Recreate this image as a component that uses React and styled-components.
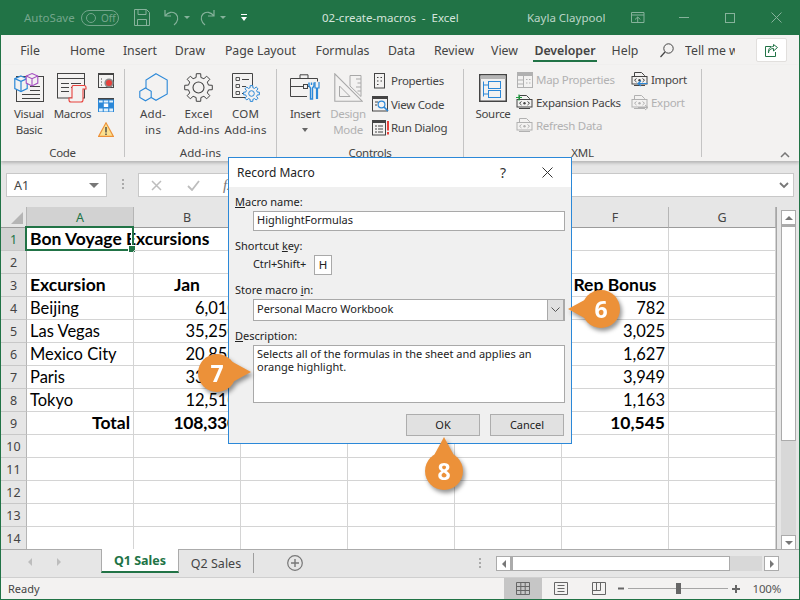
import React from "react";
import styled, { createGlobalStyle } from "styled-components";

const GREEN = "#217346";
const INK = "#444444";
const DIM = "#b1b1b1";
const BLUE = "#2b88d8";
const UI = '"Noto Sans", "Open Sans", sans-serif';

const Global = createGlobalStyle`
  * { box-sizing: border-box; }
  html, body { margin: 0; padding: 0; background: #fff; }
  #root { width: 800px; height: 600px; }
`;

const Win = styled.div`
  position: relative; width: 800px; height: 600px; overflow: hidden;
  display: flex; flex-direction: column;
  border: 1px solid ${GREEN}; border-top: 0;
  font-family: ${UI}; color: ${INK}; background: #fff;
`;
const Drawing = styled.svg` display: block; flex: none; `;

/* ---------- title bar ---------- */
const TitleBar = styled.div`
  height: 35px; flex: none; display: flex; align-items: center;
  background: ${GREEN}; margin: 0 -1px; padding-left: 24px;
  font-size: 11.5px; color: #d5e4dc;
`;
const Slot = styled.div`
  flex: none; width: ${p => p.$w}px; display: flex; align-items: center;
  white-space: nowrap; color: ${p => p.$color || "inherit"};
  justify-content: ${p => p.$center ? "center" : "flex-start"};
`;
const Toggle = styled.div`
  width: 38px; height: 16px; border: 1px solid #74a68c; border-radius: 8px; color: #74a68c;
  font-size: 10px; display: flex; align-items: center; padding-left: 4px; gap: 5px;
  &::before { content: ""; width: 8px; height: 8px; border-radius: 50%; border: 1px solid #74a68c; }
`;

/* ---------- tabs ---------- */
const TabBar = styled.div`
  height: 30px; flex: none; display: flex; background: #f3f2f1; padding-left: 9px; font-size: 12.3px;
`;
const Tab = styled.div`
  flex: none; width: ${p => p.$w}px; margin-right: ${p => p.$mr || 0}px;
  display: flex; justify-content: center; align-items: flex-start; padding-top: 7px;
`;
const TabLabel = styled.span`
  line-height: 18px; white-space: nowrap; padding-inline: 1px;
  border-bottom: 2px solid ${p => p.$on ? GREEN : "transparent"};
  font-weight: ${p => p.$on ? 600 : 400};
`;
const TellMe = styled.div`
  margin-left: 11px; width: 50px; overflow: hidden; white-space: nowrap; line-height: 18px; margin-top: 7px;
`;
const SearchBox = styled.div` margin-left: 15px; margin-top: 8px; height: 16px; `;
const ShareBtn = styled.div`
  width: 31px; height: 24px; margin: 3px 0 0 21px; background: #fff; border: 1px solid #e1dfdd; border-radius: 2px;
  display: flex; align-items: center; justify-content: center;
`;

/* ---------- ribbon ---------- */
const Ribbon = styled.div`
  height: 96px; flex: none; display: flex; background: #f3f2f1; padding-top: 4px; padding-bottom: 4px;
  box-shadow: 0 2px 3px rgba(0,0,0,.22); position: relative; z-index: 1; font-size: 11.5px; letter-spacing: -.3px;
`;
const Group = styled.div`
  flex: none; width: ${p => p.$w}px; border-right: 1px solid #c4c4c4; display: flex; flex-direction: column;
`;
const GroupRow = styled.div` display: flex; flex: 1; padding-left: ${p => p.$pl || 0}px; `;
const GroupLabel = styled.div`
  text-align: center; line-height: 16px; height: 16px; margin-bottom: -4px;
  letter-spacing: ${p => p.$wide ? ".1px" : "inherit"};
`;
const BigBtn = styled.div`
  flex: none; width: ${p => p.$w}px; display: flex; flex-direction: column; align-items: center;
  color: ${p => p.$off ? DIM : INK};
`;
const BigIcon = styled.div` height: 37px; flex: none; display: flex; align-items: center; justify-content: center; `;
const BigText = styled.div`
  line-height: 16px; text-align: center; white-space: nowrap;
  letter-spacing: ${p => p.$wide ? ".2px" : "inherit"};
`;
const Caret = styled.div`
  margin: 6px auto 0; width: 0; height: 0; border: 3px solid transparent; border-top: 4px solid #666; border-bottom: 0;
`;
const IconCol = styled.div`
  flex: none; width: ${p => p.$w}px; margin-left: ${p => p.$ml || 0}px; margin-top: ${p => p.$mt || 0}px;
  display: flex; flex-direction: column;
`;
const IconCell = styled.div` height: ${p => p.$h}px; display: flex; align-items: center; `;
const SmallRow = styled.div`
  height: ${p => p.$h || 23.5}px; display: flex; align-items: center; white-space: nowrap; color: ${p => p.$off ? DIM : INK};
`;
const SmallIcon = styled.div`
  width: ${p => p.$w}px; padding-left: ${p => p.$pl || 0}px; flex: none; display: flex; align-items: center;
`;
const Collapse = styled.div` margin: auto 9px -1px auto; `;

/* ---------- formula bar ---------- */
const FormulaBar = styled.div`
  height: 46px; flex: none; background: #e6e6e6; padding: 12px 5px 0 5px; display: flex; align-items: flex-start;
`;
const NameBox = styled.div`
  width: 101px; height: 24px; background: #fff; border: 1px solid #c8c8c8; display: flex; align-items: center;
  justify-content: space-between; padding: 0 7px; font-size: 12.5px;
`;
const DownTri = styled.span`
  width: 0; height: 0; border: 5px solid transparent; border-top: 5px solid #777; border-bottom: 0;
`;
const GripSlot = styled.div` width: 31px; height: 24px; flex: none; display: flex; align-items: center; justify-content: center; `;
const Grip = styled.div`
  width: 2px; height: ${p => p.$h || 11}px; flex: none;
  background: repeating-linear-gradient(#aaa 0 2px, transparent 2px 4px);
`;
const FormulaField = styled.div`
  flex: 1; height: 24px; background: #fff; border: 1px solid #c8c8c8;
  display: flex; align-items: center; padding: 0 4px 0 12px;
`;
const FxBtn = styled.div` width: ${p => p.$w}px; flex: none; `;
const FxGlyph = styled.i` font-family: "Liberation Serif", serif; font-size: 15px; color: #777; `;
const Expand = styled.div` margin-left: auto; `;

/* ---------- sheet ---------- */
const SheetWrap = styled.div` height: 342px; flex: none; display: flex; background: #e6e6e6; `;
const Grid = styled.div`
  width: 776px; height: 342px; overflow: hidden; flex: none; background: #fff; border-right: 1px solid #a6a6a6;
  display: grid; grid-template-columns: 26px repeat(7, 107px); grid-template-rows: 21px repeat(14, 23px);
`;
const Corner = styled.div`
  background: #e6e6e6; border-right: 1px solid #b5b5b5; border-bottom: 1px solid #9b9b9b;
  display: flex; align-items: flex-end; justify-content: flex-end; padding: 0 3px 3px 0;
  &::after { content: ""; width: 12px; height: 12px; background: #b5b5b5; clip-path: polygon(100% 0, 100% 100%, 0 100%); }
`;
const ColHead = styled.div`
  background: ${p => p.$on ? "#d2d2d2" : "#e6e6e6"}; color: ${p => p.$on ? GREEN : INK};
  border-right: 1px solid #b5b5b5; border-bottom: 1px solid #9b9b9b;
  font-size: 12.5px; display: flex; align-items: center; justify-content: center;
`;
const RowHead = styled.div`
  background: ${p => p.$on ? "#d2d2d2" : "#e6e6e6"}; color: ${p => p.$on ? GREEN : INK};
  border-right: 1px solid #b5b5b5; border-bottom: 1px solid #c8c8c8;
  font-size: 12.5px; display: flex; align-items: center; justify-content: center; padding-top: 1px;
`;
const Cell = styled.div`
  position: relative; border-right: 1px solid #d4d4d4; border-bottom: 1px solid #d4d4d4;
  font-family: Lato, "Liberation Sans", sans-serif; color: #000;
  font-size: ${p => p.$bold ? 17.5 : 16.5}px;
  font-weight: ${p => p.$bold ? 700 : 400};
  letter-spacing: ${p => p.$tight ? "-.2px" : 0};
  white-space: nowrap; line-height: 22px; padding: 0 3px;
  text-align: ${p => p.$align || "left"};
`;
const Selection = styled.div`
  position: absolute; left: -2px; top: -2px; right: -1px; bottom: -1px;
  border: 2px solid ${GREEN}; box-shadow: inset 0 0 0 1px #fff;
  &::after { content: ""; position: absolute; right: -4px; bottom: -4px; width: 6px; height: 6px; background: ${GREEN}; border: 1px solid #fff; }
`;

const VScroll = styled.div`
  flex: none; width: 15px; margin: 3px 0 0 4px; height: 340px; background: #d8d8d8; display: flex; flex-direction: column;
  position: relative; z-index: 1;
`;
const ScrollBtn = styled.div`
  height: 15px; flex: none; background: #fff; border: 1px solid #ababab; display: flex; align-items: center; justify-content: center;
  margin-top: ${p => p.$push ? "auto" : 0};
`;
const VThumb = styled.div` height: 216px; flex: none; background: #fff; border: 1px solid #ababab; border-top-width: 2px; `;
const Tri = styled.span`
  width: 0; height: 0; border: 4px solid transparent;
  ${p => p.$dir === "up" && `border-bottom: 4px solid #777; border-top: 0;`}
  ${p => p.$dir === "down" && `border-top: 4px solid #777; border-bottom: 0;`}
  ${p => p.$dir === "left" && `border-right: 4px solid ${p.$c || "#777"}; border-left: 0;`}
  ${p => p.$dir === "right" && `border-left: 4px solid ${p.$c || "#777"}; border-right: 0;`}
`;

/* ---------- sheet tabs ---------- */
const SheetTabs = styled.div`
  height: 28px; flex: none; display: flex; background: #e6e6e6; border-top: 1px solid #ababab;
`;
const TabNav = styled.div`
  width: 100px; flex: none; display: flex; align-items: center; padding: 0 0 4px 27px; gap: 25px;
`;
const ActiveSheet = styled.div`
  width: 78px; flex: none; height: 24px; margin-top: -1px; background: #fff; color: ${GREEN}; font-weight: 700; font-size: 12.5px;
  border-left: 1px solid #ababab; border-right: 1px solid #ababab; border-bottom: 2px solid ${GREEN};
  display: flex; align-items: center; justify-content: center;
`;
const SheetTab = styled.div`
  width: 75px; height: 20px; margin-top: 3px; flex: none; border-right: 1px solid #9e9e9e; font-size: 12.5px;
  display: flex; align-items: center; justify-content: center;
`;
const AddSheet = styled.div` margin: 5px 0 0 33px; height: 16px; `;
const HArea = styled.div` margin: 6px 20px 0 auto; display: flex; align-items: center; height: 15px; `;
const HBtn = styled.div`
  width: ${p => p.$w}px; margin-left: ${p => p.$ml || 0}px; height: 15px; flex: none; background: #fff;
  border: 1px solid #ababab; display: flex; align-items: center; justify-content: center;
`;
const HThumb = styled.div` width: 219px; height: 15px; background: #fff; border: 1px solid #ababab; border-left-width: 2px; flex: none; `;
const HRest = styled.div` width: 32px; height: 15px; background: #d8d8d8; flex: none; margin-right: 2px; `;

/* ---------- status ---------- */
const Status = styled.div`
  height: 22px; flex: none; background: #f3f2f1; border-top: 1px solid #cfcfcf; display: flex; align-items: center;
  padding-left: 7px; font-size: 11px;
`;
const ViewBtn = styled.div`
  width: ${p => p.$w}px; flex: none; height: 21px; display: flex; align-items: center; justify-content: center;
  background: ${p => p.$on ? "#c6c6c6" : "transparent"}; margin-left: ${p => p.$push ? "auto" : 0};
`;
const Slider = styled.div` width: 100px; height: 1px; background: #a6a6a6; margin: 0 4px 0 3px; position: relative; `;
const SliderKnob = styled.div` position: absolute; left: 48px; top: -5px; width: 5px; height: 11px; background: #666; `;
const Zoom = styled.div` margin: 0 18px 0 13px; font-size: 11.5px; letter-spacing: -.2px; color: #555; `;

/* ---------- dialog ---------- */
const Dialog = styled.div`
  position: absolute; left: 227px; top: 157px; width: 344px; height: 287px; z-index: 5;
  border: 1px solid #2b88d8; background: #f0f0f0; display: flex; flex-direction: column;
  font-size: 11px; color: #222;
`;
const DlgTitle = styled.div`
  height: 29px; flex: none; background: #fff; display: flex; align-items: center; padding: 0 0 0 8px; font-size: 12px;
`;
const DlgHelp = styled.div` margin-left: auto; width: 16px; margin-right: 13px; font-size: 14px; color: #333; text-align: center; `;
const DlgClose = styled.div` width: 47px; display: flex; justify-content: center; `;
const DlgBody = styled.div` flex: 1; padding: 7px 6px 0 6px; display: flex; flex-direction: column; `;
const FieldLabel = styled.div` line-height: 14px; height: 14px; margin-top: ${p => p.$mt || 8}px; white-space: nowrap; `;
const Field = styled.div`
  margin: 2px 0 0 18px; height: ${p => p.$h}px; background: #fff; border: 1px solid #a9a9a9; flex: none;
  padding: ${p => p.$multi ? "1px 3px" : "0 3px 2px"}; line-height: ${p => p.$multi ? "13px" : `${p.$h - 4}px`};
  white-space: ${p => p.$multi ? "normal" : "nowrap"}; position: relative;
`;
const ShortcutRow = styled.div` margin: 2px 0 0 18px; height: 20px; display: flex; align-items: center; `;
const KeyLabel = styled.span` width: 61px; flex: none; line-height: 18px; padding-bottom: 2px; white-space: nowrap; letter-spacing: -.1px; `;
const KeyBox = styled.div`
  width: 18px; height: 20px; background: #fff; border: 1px solid #a9a9a9; font-size: 11.5px; padding-bottom: 1px;
  display: flex; align-items: center; justify-content: center;
`;
const SelectBtn = styled.div`
  position: absolute; right: -1px; top: -1px; bottom: -1px; width: 18px; background: #e1e1e1; border: 1px solid #a9a9a9; border-right-width: 2px;
  display: flex; align-items: center; justify-content: center;
`;
const DlgButtons = styled.div` margin: 11px 1px 0 0; display: flex; justify-content: flex-end; gap: 10px; `;
const DlgButton = styled.div`
  width: 74px; height: 22px; background: #e1e1e1; border: 1px solid #adadad; padding-bottom: 2px;
  display: flex; align-items: center; justify-content: center;
`;

/* ---------- callouts ---------- */
const Bubble = styled.div`
  position: absolute; left: ${p => p.$x}px; top: ${p => p.$y}px; width: 38px; height: 38px; border-radius: 50%;
  background: #ec9139; color: #fff; z-index: 6; display: flex; align-items: center; justify-content: center;
  font-family: "Open Sans", sans-serif; font-weight: 700; font-size: 23px;
  filter: drop-shadow(2px 3px 2px rgba(0,0,0,.42));
  &::before {
    content: ""; position: absolute; width: 0; height: 0; border: 12px solid transparent;
    ${p => p.$dir === "left" && `left: -14px; top: 7px; border-right: 22px solid #ec9139; border-left: 0;`}
    ${p => p.$dir === "right" && `right: -15px; top: 6px; border-left: 22px solid #ec9139; border-right: 0;`}
    ${p => p.$dir === "up" && `top: -15px; left: 7px; border-bottom: 22px solid #ec9139; border-top: 0;`}
  }
  span { position: relative; }
`;

/* ---------- icons ---------- */
const gear = (cx, cy, r1, r2, n) => {
  const pts = [];
  const step = (Math.PI * 2) / n;
  for (let i = 0; i < n; i++) {
    const a = i * step - Math.PI / 2;
    const w = step * 0.2;
    const w2 = step * 0.3;
    [[r1, a - w2], [r2, a - w], [r2, a + w], [r1, a + w2]].forEach(([r, t]) =>
      pts.push(`${(cx + r * Math.cos(t)).toFixed(1)},${(cy + r * Math.sin(t)).toFixed(1)}`));
  }
  return pts.join(" ");
};

const Svg = ({ w, h, children }) => (
  <Drawing width={w} height={h} viewBox={`0 0 ${w} ${h}`} fill="none">{children}</Drawing>
);
const BG = "#f3f2f1";
const PURPLE = "#a650c2";
const RED = "#e8413c";

const VisualBasicIcon = () => (
  <Svg w={30} h={30}>
    <rect x="2.5" y="3.5" width="27" height="25" stroke={INK} />
    <path d="M16 13.5h10M16 17.5h10M8 21.5h18M8 25.5h18" stroke={INK} />
    <path d="M7 3l6.2 2.6v10L7 18.5.8 15.6v-10z" fill={BG} stroke={BLUE} strokeWidth="1.2" />
    <path d="M.8 5.6 7 8.3l6.2-2.7M7 8.3v10" stroke={BLUE} strokeWidth="1.2" />
    <path d="M18 .6l5.8 2.5v7L18 13l-5.8-2.9v-7z" fill={BG} stroke={PURPLE} strokeWidth="1.1" />
    <path d="M12.2 3.1 18 5.700l5.800-2.600M18 5.700V13" stroke={PURPLE} strokeWidth="1.1" />
  </Svg>
);
const MacrosIcon = () => (
  <Svg w={31} h={30}>
    <rect x=".5" y=".5" width="27" height="24.5" stroke={INK} fill={BG} />
    <path d="M1 5.500h26M4 10.500h8M4 14.500h8M4 18.500h8M14 10.500h10M14 14.500h10" stroke={INK} />
    <path d="M16 12.500h11a2 2 0 0 1 2 2v1.500h-3V27a2 2 0 0 1-2 2H14a2 2 0 0 1-2-2v-2h3V14a2 2 0 0 1 1-1.500z" fill={BG} stroke={RED} strokeWidth="1.1" />
  </Svg>
);
const RecordIcon = () => (
  <Svg w={16} h={16}>
    <rect x=".5" y=".5" width="15" height="14" stroke={INK} fill={BG} />
    <rect x="0" y="0" width="16" height="2" fill={INK} />
    <path d="M3 6h1M3 9h1M3 12h1" stroke={INK} />
    <circle cx="11" cy="10" r="4.600" fill="#8a8a8a" />
    <circle cx="11" cy="10" r="3" fill={RED} />
  </Svg>
);
const TableIcon = () => (
  <Svg w={16} h={14}>
    <rect x="0" y="0" width="16" height="14" fill={BLUE} />
    <rect x="0" y="0" width="16" height="1.500" fill={INK} />
    <rect x="5.800" y="5.500" width="4.400" height="3.500" fill="#fff" />
    <path d="M1 10.500h3.700v3H1zM5.800 10.500h4.400v3H5.800zM11.300 10.500H15v3h-3.700z" fill="#dff0fb" />
    <path d="M1 2.500h3.700v2H1zM5.800 2.500h4.400v2H5.800zM11.300 2.500H15v2h-3.700z" fill="#dff0fb" />
  </Svg>
);
const WarnIcon = () => (
  <Svg w={16} h={15}>
    <path d="M8 .8 15.400 14.400H.6z" fill="#fbe08e" stroke="#ed9138" strokeWidth="1.1" />
    <path d="M8 5v5.500M8 11.500v1.600" stroke="#444" strokeWidth="1.4" />
  </Svg>
);
const AddInsIcon = () => (
  <Svg w={29} h={29}>
    <path d="M17 .7 28.200 7v14L17 27.300 7 21.500V7z" stroke={BLUE} strokeWidth="1.1" />
    <path d="M6.500 15 12.200 18.200v6.300L6.500 27.800.8 24.500v-6.300z" fill={BG} stroke={BLUE} strokeWidth="1.1" />
  </Svg>
);
const GearIcon = () => (
  <Svg w={29} h={29}>
    <polygon points={gear(14.5, 14.5, 10.3, 14, 8)} stroke={INK} strokeWidth="1" />
    <circle cx="14.500" cy="14.500" r="5.500" stroke={INK} strokeWidth="1.1" />
  </Svg>
);
const ComIcon = () => (
  <Svg w={28} h={29}>
    <path d="M.5.5h20v24H.5z" stroke={INK} />
    <path d="M4 4.500h3.500v3H4zM4 11.500h3.500v3H4zM4 18.500h3.500v3H4z" stroke={INK} strokeWidth=".9" />
    <path d="M10 6.500h7M10 13.500h4M10 20.500h2" stroke={INK} />
    <polygon points={gear(19.5, 20.5, 6, 8, 8)} fill={BG} stroke={BLUE} strokeWidth="1" />
    <circle cx="19.500" cy="20.500" r="2.800" stroke={BLUE} />
  </Svg>
);
const InsertIcon = () => (
  <Svg w={30} h={27}>
    <path d="M17 22.500H.5v-18h27v3" stroke={INK} />
    <path d="M10 4V.8h8V4M.5 12.500h13M18 12.500h2" stroke={INK} />
    <rect x="13.500" y="10.500" width="4" height="4" stroke={INK} fill={BG} />
    <path d="M19 8.500v3.500l1.500 2V25h2V14l1.500-2V8.500M21.500 8.500v2.500" stroke={BLUE} strokeWidth="1.4" />
    <path d="M26 8v6h1.500v10.500h1V14H30V8" stroke={BLUE} strokeWidth="1.2" transform="translate(-1 0)" />
  </Svg>
);
const DesignIcon = () => (
  <Svg w={29} h={29}>
    <path d="M.8.8v27.400h27.400z" stroke="#a8a8a8" strokeWidth="1.1" />
    <path d="M5.500 13v10.500H16z" stroke="#a8a8a8" />
    <path d="M16 2.500h11v21L16 13z" stroke="#a8a8a8" fill={BG} />
    <path d="M22 6h5M23.500 10h3.500M22 14h5M23.500 18h3.500" stroke="#a8a8a8" />
  </Svg>
);
const SourceIcon = () => (
  <Svg w={28} h={28}>
    <rect x=".75" y=".75" width="26.500" height="26.500" stroke={INK} strokeWidth="1.5" />
    <rect x="1.500" y="1.500" width="25" height="3.500" fill="#b5b5b5" />
    <path d="M4.500 7.500v15M4.500 11h5M4.500 20h5" stroke={BLUE} />
    <rect x="9.500" y="7.500" width="12" height="7" stroke={BLUE} />
    <rect x="9.500" y="16.500" width="12" height="7" stroke={BLUE} />
  </Svg>
);
const PropsIcon = () => (
  <Svg w={12} h={16}>
    <rect x=".5" y=".5" width="10" height="14.500" stroke={INK} />
    <path d="M3 4.500h1.500M6.500 4.500H8M3 8h1.500M6.500 8H8M3 11.500h1.500" stroke={INK} />
  </Svg>
);
const ViewCodeIcon = () => (
  <Svg w={17} h={16}>
    <rect x=".5" y=".5" width="15" height="14.500" stroke={INK} />
    <rect x="1" y="1" width="14" height="2" fill={INK} />
    <path d="M3 6h3M3 9h2" stroke={INK} />
    <circle cx="9.500" cy="8.500" r="3.400" stroke={BLUE} strokeWidth="1.2" fill={BG} />
    <path d="M12 11l4 4" stroke={BLUE} strokeWidth="1.7" />
  </Svg>
);
const RunDialogIcon = () => (
  <Svg w={18} h={16}>
    <rect x=".5" y=".5" width="13" height="14.500" stroke={INK} />
    <rect x="1" y="1" width="12" height="2" fill={INK} />
    <path d="M3 6h2M6 6h5M3 9h2M6 9h5M3 12h2M6 12h5" stroke={INK} />
    <path d="M16 1v9.500M16 12v2.500" stroke={RED} strokeWidth="2" />
  </Svg>
);
const MapPropsIcon = () => (
  <Svg w={16} h={16}>
    <rect x=".5" y=".5" width="15" height="15" stroke={DIM} />
    <rect x="1" y="1" width="14" height="3" fill={DIM} />
    <path d="M.5 8h6M.5 12h6M6.500 4v11.500" stroke={DIM} />
    <path d="M9 7.500h1.500M12 7.500h1.500M9 11h1.500M12 11h1.500" stroke={DIM} />
  </Svg>
);
const XmlDoc = ({ c, children }) => (
  <Svg w={17} h={17}>
    <path d="M3.500 5V1.500h7l3 3V5M3 14.500h11" stroke={c} />
    <rect x="1" y="5.500" width="15" height="7.500" stroke={c} fill={BG} />
    <path d="M5.500 7.500 3.500 9.200l2 1.800M11.500 7.500l2 1.700-2 1.800" stroke={c} />
    <circle cx="8.500" cy="9.200" r="1.200" fill={c} />
    {children}
  </Svg>
);
const CustomizeIcon = () => (
  <Svg w={8} h={9}>
    <path d="M1 1.500h6" stroke="#fff" />
    <path d="M1 4h6L4 8z" fill="#fff" />
  </Svg>
);
const FADE = "#86b29b";

const App = () => {
  const rows = [
    [{ t: "Bon Voyage Excursions", bold: true, sel: true }],
    [],
    [{ t: "Excursion", bold: true }, { t: "Jan", bold: true, align: "center" }, null, null, null, { t: "Rep Bonus", bold: true, align: "center" }],
    [{ t: "Beijing" }, { t: "6,010", align: "right" }, null, null, null, { t: "782", align: "right" }],
    [{ t: "Las Vegas" }, { t: "35,250", align: "right" }, null, null, null, { t: "3,025", align: "right" }],
    [{ t: "Mexico City" }, { t: "20,850", align: "right" }, null, null, null, { t: "1,627", align: "right" }],
    [{ t: "Paris" }, { t: "33,670", align: "right" }, null, null, null, { t: "3,949", align: "right" }],
    [{ t: "Tokyo" }, { t: "12,510", align: "right" }, null, null, null, { t: "1,163", align: "right" }],
    [{ t: "Total", bold: true, align: "right" }, { t: "108,330", bold: true, align: "right", tight: true }, null, null, null, { t: "10,545", bold: true, align: "right" }],
    [], [], [], [], [],
  ];
  const cols = ["A", "B", "C", "D", "E", "F", "G"];
  return (
    <Win>
      <Global />
      <TitleBar>
        <Slot $w={57} $color="#74a68c">AutoSave</Slot>
        <Slot $w={53}><Toggle>Off</Toggle></Slot>
        <Slot $w={30}>
          <Svg w={16} h={17}>
            <path d="M.5.5h12l3 3v13H.5zM4 .5v5h8v-5M3.500 16.500v-6h9v6" stroke={FADE} />
          </Svg>
        </Slot>
        <Slot $w={20}>
          <Svg w={16} h={17}>
            <path d="M1 1v6h6M1 7c3-4 8-5 11-2s2 8-2 11" stroke={FADE} strokeWidth="1.2" />
          </Svg>
        </Slot>
        <Slot $w={15}>
          <Svg w={7} h={4}><path d="M0 0h6L3 3z" fill={FADE} /></Svg>
        </Slot>
        <Slot $w={21}>
          <Svg w={16} h={17}>
            <path d="M15 1v6H9M15 7c-3-4-8-5-11-2s-2 8 2 11" stroke={FADE} strokeWidth="1.2" />
          </Svg>
        </Slot>
        <Slot $w={20}>
          <Svg w={7} h={4}><path d="M0 0h6L3 3z" fill={FADE} /></Svg>
        </Slot>
        <Slot $w={82}><CustomizeIcon /></Slot>
        <Slot $w={205}>02-create-macros&nbsp; -&nbsp; Excel</Slot>
        <Slot $w={104} $color="#bcd5c8">Kayla Claypool</Slot>
        <Slot $w={48}>
          <Svg w={14} h={12}>
            <path d="M.5.5h12.500v10H.5zM.5 3h12.500M4 7.500 6.700 5l2.700 2.500M6.700 5v5" stroke={FADE} />
          </Svg>
        </Slot>
        <Slot $w={46}><Svg w={10} h={2}><path d="M0 .5h10" stroke={FADE} /></Svg></Slot>
        <Slot $w={46}><Svg w={10} h={10}><rect x=".5" y=".5" width="9" height="9" stroke={FADE} /></Svg></Slot>
        <Slot $w={15}><Svg w={11} h={11}><path d="M.5.5l10 10M10.500.5l-10 10" stroke={FADE} /></Svg></Slot>
      </TitleBar>

      <TabBar>
        {[["File", 40, 10], ["Home", 55], ["Insert", 50], ["Draw", 50], ["Page Layout", 91], ["Formulas", 73], ["Data", 45], ["Review", 60], ["View", 41], ["Developer", 80], ["Help", 40]].map(([t, w, mr]) => (
          <Tab key={t} $w={w} $mr={mr}><TabLabel $on={t === "Developer"}>{t}</TabLabel></Tab>
        ))}
        <SearchBox>
          <Svg w={14} h={15}>
            <circle cx="8.500" cy="5.500" r="4.700" stroke={INK} />
            <path d="M5 9l-4.500 5" stroke={INK} strokeWidth="1.2" />
          </Svg>
        </SearchBox>
        <TellMe>Tell me what you want to do</TellMe>
        <ShareBtn>
          <Svg w={13} h={13}>
            <path d="M6 2.500H.5v10h10V8" stroke={GREEN} />
            <path d="M3.500 9c0-3 2-4.500 5-4.500V7L12.500 3.500 8.500.5V2.500C5 2.500 3 5 3.500 9z" stroke={GREEN} />
          </Svg>
        </ShareBtn>
      </TabBar>

      <Ribbon>
        <Group $w={124}>
          <GroupRow $pl={7}>
            <BigBtn $w={42}><BigIcon><VisualBasicIcon /></BigIcon><BigText>Visual<br />Basic</BigText></BigBtn>
            <BigBtn $w={45}><BigIcon><MacrosIcon /></BigIcon><BigText>Macros</BigText></BigBtn>
            <IconCol $w={16} $ml={3}>
              <IconCell $h={23}><RecordIcon /></IconCell>
              <IconCell $h={25}><TableIcon /></IconCell>
              <IconCell $h={24}><WarnIcon /></IconCell>
            </IconCol>
          </GroupRow>
          <GroupLabel>Code</GroupLabel>
        </Group>
        <Group $w={152}>
          <GroupRow $pl={5}>
            <BigBtn $w={46}><BigIcon><AddInsIcon /></BigIcon><BigText $wide>Add-<br />ins</BigText></BigBtn>
            <BigBtn $w={45}><BigIcon><GearIcon /></BigIcon><BigText $wide>Excel<br />Add-ins</BigText></BigBtn>
            <BigBtn $w={49}><BigIcon><ComIcon /></BigIcon><BigText $wide>COM<br />Add-ins</BigText></BigBtn>
          </GroupRow>
          <GroupLabel $wide>Add-ins</GroupLabel>
        </Group>
        <Group $w={187}>
          <GroupRow $pl={6}>
            <BigBtn $w={44}><BigIcon><InsertIcon /></BigIcon><BigText>Insert</BigText><Caret /></BigBtn>
            <BigBtn $w={42} $off><BigIcon><DesignIcon /></BigIcon><BigText>Design<br />Mode</BigText></BigBtn>
            <IconCol $w={90}>
              <SmallRow><SmallIcon $w={22} $pl={5}><PropsIcon /></SmallIcon>Properties</SmallRow>
              <SmallRow><SmallIcon $w={22} $pl={3}><ViewCodeIcon /></SmallIcon>View Code</SmallRow>
              <SmallRow><SmallIcon $w={22} $pl={3}><RunDialogIcon /></SmallIcon>Run Dialog</SmallRow>
            </IconCol>
          </GroupRow>
          <GroupLabel>Controls</GroupLabel>
        </Group>
        <Group $w={238}>
          <GroupRow $pl={6}>
            <BigBtn $w={46}><BigIcon><SourceIcon /></BigIcon><BigText>Source</BigText></BigBtn>
            <IconCol $w={115} $mt={-1}>
              <SmallRow $off $h={23}><SmallIcon $w={20} $pl={1}><MapPropsIcon /></SmallIcon>Map Properties</SmallRow>
              <SmallRow $h={23}><SmallIcon $w={20}>
                <XmlDoc c={INK}><path d="M0 3.500h6M3 .5v6" stroke="#1f9e3f" strokeWidth="1.200" /></XmlDoc>
              </SmallIcon>Expansion Packs</SmallRow>
              <SmallRow $off $h={23}><SmallIcon $w={20}><XmlDoc c={DIM} /></SmallIcon>Refresh Data</SmallRow>
            </IconCol>
            <IconCol $w={60} $mt={-1}>
              <SmallRow $h={23}><SmallIcon $w={20}>
                <XmlDoc c={INK}><path d="M16.500 12.500H7M10 10l-3 2.500 3 2.500" stroke={BLUE} fill="none" strokeWidth="1.200" /></XmlDoc>
              </SmallIcon>Import</SmallRow>
              <SmallRow $off $h={23}><SmallIcon $w={20}>
                <XmlDoc c={DIM}><path d="M7 13.500h9.500M14 11l3 2.500-3 2.500" stroke={DIM} fill="none" /></XmlDoc>
              </SmallIcon>Export</SmallRow>
            </IconCol>
          </GroupRow>
          <GroupLabel>XML</GroupLabel>
        </Group>
        <Collapse>
          <Svg w={10} h={6}><path d="M1 5l4-4 4 4" stroke="#777" strokeWidth="1.500" /></Svg>
        </Collapse>
      </Ribbon>

      <FormulaBar>
        <NameBox>A1<DownTri /></NameBox>
        <GripSlot><Grip $h={12} /></GripSlot>
        <FormulaField>
          <FxBtn $w={36}>
            <Svg w={11} h={11}><path d="M1 1l9 9M10 1l-9 9" stroke="#bdbdbd" strokeWidth="1.500" /></Svg>
          </FxBtn>
          <FxBtn $w={36}>
            <Svg w={13} h={11}><path d="M1 6l4 4 7-9" stroke="#bdbdbd" strokeWidth="1.800" /></Svg>
          </FxBtn>
          <FxGlyph>fx</FxGlyph>
          <Expand>
            <Svg w={10} h={7}><path d="M1 1l4 4 4-4" stroke="#777" strokeWidth="1.800" /></Svg>
          </Expand>
        </FormulaField>
      </FormulaBar>

      <SheetWrap>
        <Grid>
          <Corner />
          {cols.map(c => <ColHead key={c} $on={c === "A"}>{c}</ColHead>)}
          {rows.map((r, i) => (
            <React.Fragment key={i}>
              <RowHead $on={i === 0}>{i + 1}</RowHead>
              {cols.map((c, j) => {
                const d = r[j];
                return (
                  <Cell key={c} $bold={d?.bold} $align={d?.align} $tight={d?.tight}>
                    {d?.t}
                    {d?.sel && <Selection />}
                  </Cell>
                );
              })}
            </React.Fragment>
          ))}
        </Grid>
        <VScroll>
          <ScrollBtn><Tri $dir="up" /></ScrollBtn>
          <VThumb />
          <ScrollBtn $push><Tri $dir="down" /></ScrollBtn>
        </VScroll>
      </SheetWrap>

      <SheetTabs>
        <TabNav><Tri $dir="left" $c="#bdbdbd" /><Tri $dir="right" $c="#bdbdbd" /></TabNav>
        <ActiveSheet>Q1 Sales</ActiveSheet>
        <SheetTab>Q2 Sales</SheetTab>
        <AddSheet>
          <Svg w={16} h={16}>
            <circle cx="8" cy="8" r="7.300" stroke="#777" strokeWidth="1.200" />
            <path d="M4 8h8M8 4v8" stroke="#777" strokeWidth="1.400" />
          </Svg>
        </AddSheet>
        <HArea>
          <Grip $h={11} />
          <HBtn $w={15} $ml={15}><Tri $dir="left" /></HBtn>
          <HThumb />
          <HRest />
          <HBtn $w={15}><Tri $dir="right" /></HBtn>
        </HArea>
      </SheetTabs>

      <Status>
        Ready
        <ViewBtn $w={38} $on $push>
          <Svg w={14} h={13}>
            <path d="M.5.5h13v12H.5zM.5 4.500h13M.5 8.500h13M4.800.5v12M9.200.5v12" stroke="#666" />
          </Svg>
        </ViewBtn>
        <ViewBtn $w={38}>
          <Svg w={14} h={13}>
            <path d="M.5.5h13v12H.5zM3.500 3.500h7M3.500 6.500h7M3.500 9.500h7" stroke="#666" />
          </Svg>
        </ViewBtn>
        <ViewBtn $w={38}>
          <Svg w={14} h={13}>
            <path d="M.5.5h13v12H.5zM.5 8.500h8M8.500.5v8M4.500.5v8" stroke="#666" />
          </Svg>
        </ViewBtn>
        <Svg w={7} h={3}><path d="M0 1.500h6" stroke="#666" strokeWidth="2" /></Svg>
        <Slider><SliderKnob /></Slider>
        <Svg w={8} h={8}><path d="M0 4h8M4 0v8" stroke="#666" strokeWidth="2" /></Svg>
        <Zoom>100%</Zoom>
      </Status>

      <Dialog>
        <DlgTitle>
          Record Macro
          <DlgHelp>?</DlgHelp>
          <DlgClose>
            <Svg w={11} h={11}><path d="M.5.5l10 10M10.500.5l-10 10" stroke="#333" /></Svg>
          </DlgClose>
        </DlgTitle>
        <DlgBody>
          <FieldLabel $mt={1}><u>M</u>acro name:</FieldLabel>
          <Field $h={20}>HighlightFormulas</Field>
          <FieldLabel>Shortcut <u>k</u>ey:</FieldLabel>
          <ShortcutRow><KeyLabel>Ctrl+Shift+</KeyLabel><KeyBox>H</KeyBox></ShortcutRow>
          <FieldLabel>Store macro <u>i</u>n:</FieldLabel>
          <Field $h={22}>
            Personal Macro Workbook
            <SelectBtn>
              <Svg w={9} h={6}><path d="M.5.5 4.500 4.500l4-4" stroke="#555" /></Svg>
            </SelectBtn>
          </Field>
          <FieldLabel><u>D</u>escription:</FieldLabel>
          <Field $h={58} $multi>Selects all of the formulas in the sheet and applies an orange highlight.</Field>
          <DlgButtons>
            <DlgButton>OK</DlgButton>
            <DlgButton>Cancel</DlgButton>
          </DlgButtons>
        </DlgBody>
      </Dialog>

      <Bubble $x={581} $y={290} $dir="left"><span>6</span></Bubble>
      <Bubble $x={197} $y={354} $dir="right"><span>7</span></Bubble>
      <Bubble $x={424} $y={452} $dir="up"><span>8</span></Bubble>
    </Win>
  );
};

export default App;
